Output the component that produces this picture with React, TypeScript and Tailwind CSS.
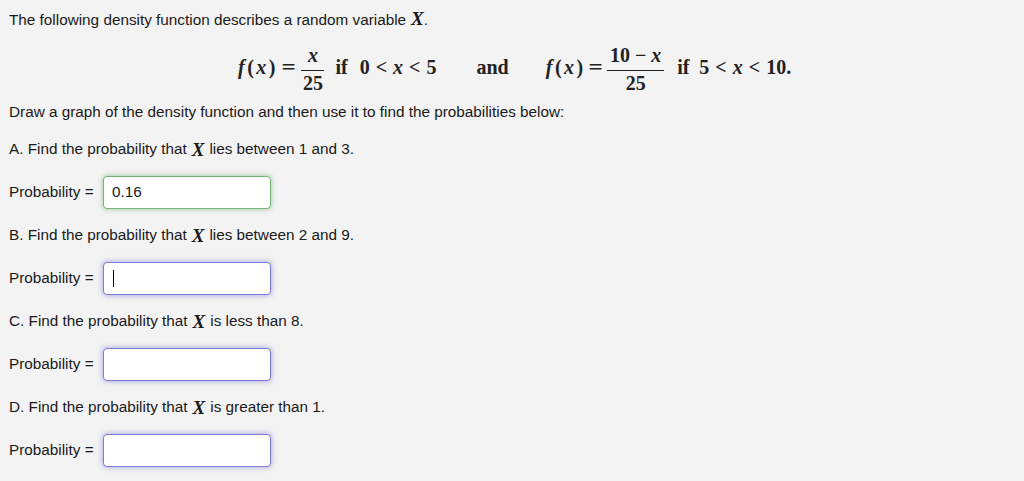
import React from 'react';

const sans = "font-['Liberation_Sans',Arial,sans-serif]";
const serif = "font-['Liberation_Serif','DejaVu_Serif',serif]";

const MathX: React.FC = () => (
  <span className={`${serif} italic font-bold text-[19px] leading-none`}>X</span>
);

const Frac: React.FC<{ top: React.ReactNode; bottom: React.ReactNode; width: string }> = ({ top, bottom, width }) => (
  <span className={`inline-flex flex-col items-center ${width}`}>
    <span className="leading-[24px] pb-[3px]">{top}</span>
    <span className="w-full h-px bg-[#222]" />
    <span className="leading-[24px]">{bottom}</span>
  </span>
);

const Fx: React.FC = () => (
  <span className="whitespace-nowrap tracking-[2.5px]">
    <i>f</i>(<i>x</i>)
  </span>
);

const Rel: React.FC<{ c: string }> = ({ c }) => <span className="mx-[6px]">{c}</span>;

const ProbRow: React.FC<{ value?: string; state: 'correct' | 'focus' | 'idle' }> = ({ value, state }) => {
  const ring =
    state === 'correct'
      ? 'border-[#76b376] shadow-[0_0_4px_1px_rgba(118,179,118,0.5)]'
      : 'border-[#7c7cd8] shadow-[0_0_5px_1px_rgba(124,124,216,0.5)]';
  return (
    <div className="flex items-center h-[33px]">
      <span className="w-[94px]">Probability =</span>
      <div className={`w-[168px] h-[33px] bg-white rounded-[4px] border ${ring} flex items-center px-[8px]`}>
        {value}
        {state === 'focus' && <span className="ml-[1px] w-px h-[17px] bg-black" />}
      </div>
    </div>
  );
};

const Question: React.FC<{ label: string; rest: string; value?: string; state: 'correct' | 'focus' | 'idle' }> = ({ label, rest, value, state }) => (
  <div className="flex flex-col">
    <p className="h-[20px] flex items-center gap-[5px]">
      <span>{label} Find the probability that</span>
      <MathX />
      <span>{rest}</span>
    </p>
    <div className="mt-[17px]">
      <ProbRow value={value} state={state} />
    </div>
  </div>
);

export default function App() {
  return (
    <div className={`w-[1024px] h-[481px] bg-[#f3f3f3] text-[#1a1a1a] ${sans} text-[15.3px] overflow-hidden`}>
      <div className="pl-[9px] pt-[10px]">
        <p className="h-[20px] flex items-center gap-[5px]">
          <span>The following density function describes a random variable</span>
          <span><MathX />.</span>
        </p>

        <div className={`${serif} text-[20px] font-semibold text-[#222] h-[56px] mt-[9px] flex items-center pl-[229px]`}>
          <Fx />
          <span className="ml-[5px] scale-x-125">=</span>
          <span className="ml-[7px]">
            <Frac top={<i>x</i>} bottom="25" width="w-[23px]" />
          </span>
          <span className="ml-[11px]">if</span>
          <span className="ml-[12px] whitespace-nowrap flex items-center">
            0<Rel c="<" /><i>x</i><Rel c="<" />5
          </span>
          <span className="ml-[40px]">and</span>
          <span className="ml-[37px]"><Fx /></span>
          <span className="ml-[4px] scale-x-125">=</span>
          <span className="ml-[6px]">
            <Frac top={<span>10 − <i>x</i></span>} bottom="25" width="w-[57px]" />
          </span>
          <span className="ml-[13px]">if</span>
          <span className="ml-[10px] whitespace-nowrap flex items-center">
            5<Rel c="<" /><i>x</i><Rel c="<" />10.
          </span>
        </div>

        <p className="h-[20px] flex items-center mt-[7px]">
          Draw a graph of the density function and then use it to find the probabilities below:
        </p>

        <div className="mt-[17px] flex flex-col gap-[16px]">
          <Question label="A." rest="lies between 1 and 3." value="0.16" state="correct" />
          <Question label="B." rest="lies between 2 and 9." state="focus" />
          <Question label="C." rest="is less than 8." state="idle" />
          <Question label="D." rest="is greater than 1." state="idle" />
        </div>
      </div>
    </div>
  );
}
